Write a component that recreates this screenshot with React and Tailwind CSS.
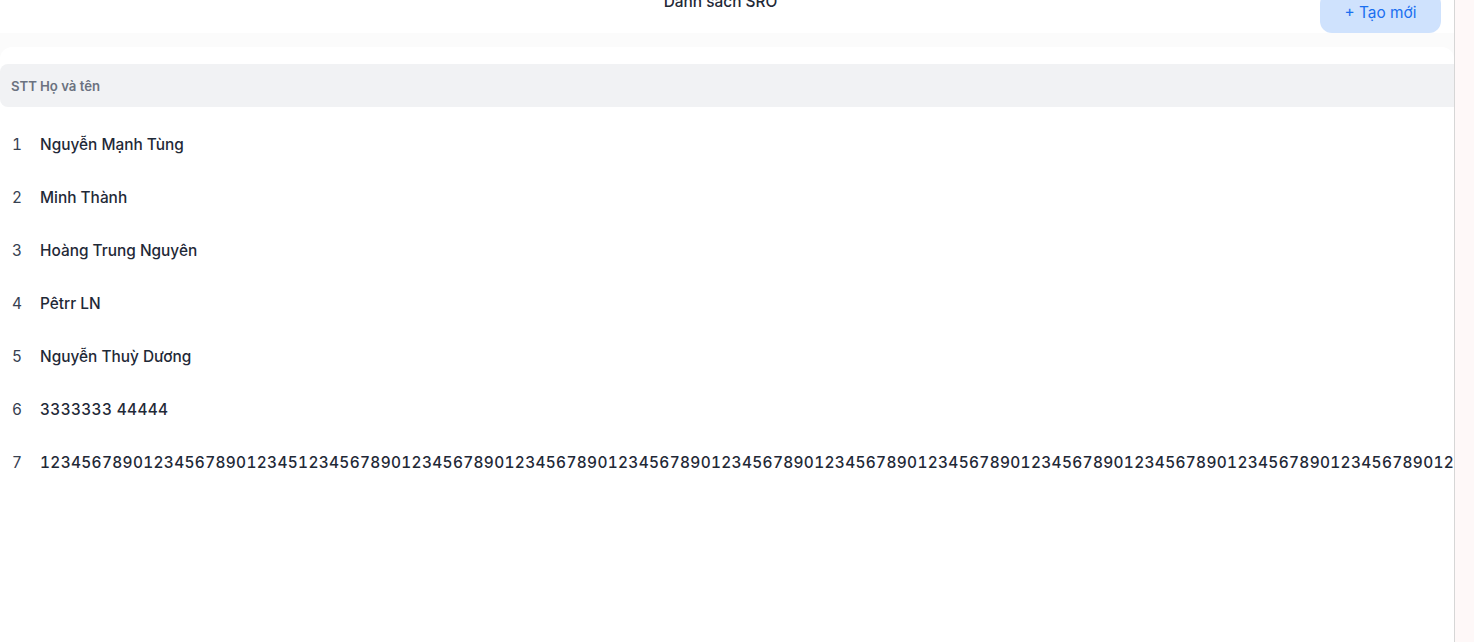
const rows = [
  'Nguyễn Mạnh Tùng',
  'Minh Thành',
  'Hoàng Trung Nguyên',
  'Pêtrr LN',
  'Nguyễn Thuỳ Dương',
  '3333333 44444',
  '123456789012345678901234512345678901234567890123456789012345678901234567890123456789012345678901234567890123456789012345678901234567890123456789012345678901234567890',
];

const App = () => {
  return (
    <div className="flex h-[642px] w-full overflow-hidden bg-white font-['Inter',sans-serif] text-[#1f2937]">
      <main className="flex min-w-0 flex-1 flex-col overflow-hidden">
        {/* Top bar */}
        <div className="-mt-[7px] flex h-[40px] shrink-0 bg-white pr-[13px]">
          <div className="w-[121px]" />
          <h1 className="-mt-[3px] flex-1 text-center text-[15.4px] font-medium leading-6">Danh sách SRO</h1>
          <button className="-mt-[1px] h-[41px] w-[121px] rounded-xl bg-[#cfe2fd] text-[15.4px] text-[#1a6ff0]">+ Tạo mới</button>
        </div>

        <div className="flex-1 bg-[#fbfbfb] pt-[14px]">
          <div className="h-full rounded-t-xl bg-white pt-[17px]">
            <div className="w-[2400px]">
              {/* Header */}
              <div className="flex h-[43px] items-center rounded-lg bg-[#f1f2f4] pt-[2px] text-[13.2px] font-semibold text-[#6b7280]">
                <div className="w-[40px] pl-[11px]">STT</div>
                <div>Họ và tên</div>
              </div>

              {/* Rows */}
              <div className="mt-[11px]">
                {rows.map((name, i) => (
                  <div key={i} className="flex h-[53px] items-center text-[15.4px] tabular-nums">
                    <div className="w-[40px] pl-[12px] text-[#374151]">{i + 1}</div>
                    <div className={i >= 5 ? 'font-medium tracking-[0.35px]' : 'font-medium'}>{name}</div>
                  </div>
                ))}
              </div>
            </div>
          </div>
        </div>
      </main>

      {/* Side panel edge */}
      <aside className="w-[20px] shrink-0 border-l border-[#d6d6d6] bg-[#fef8f8]" />
    </div>
  );
};

export default App;
